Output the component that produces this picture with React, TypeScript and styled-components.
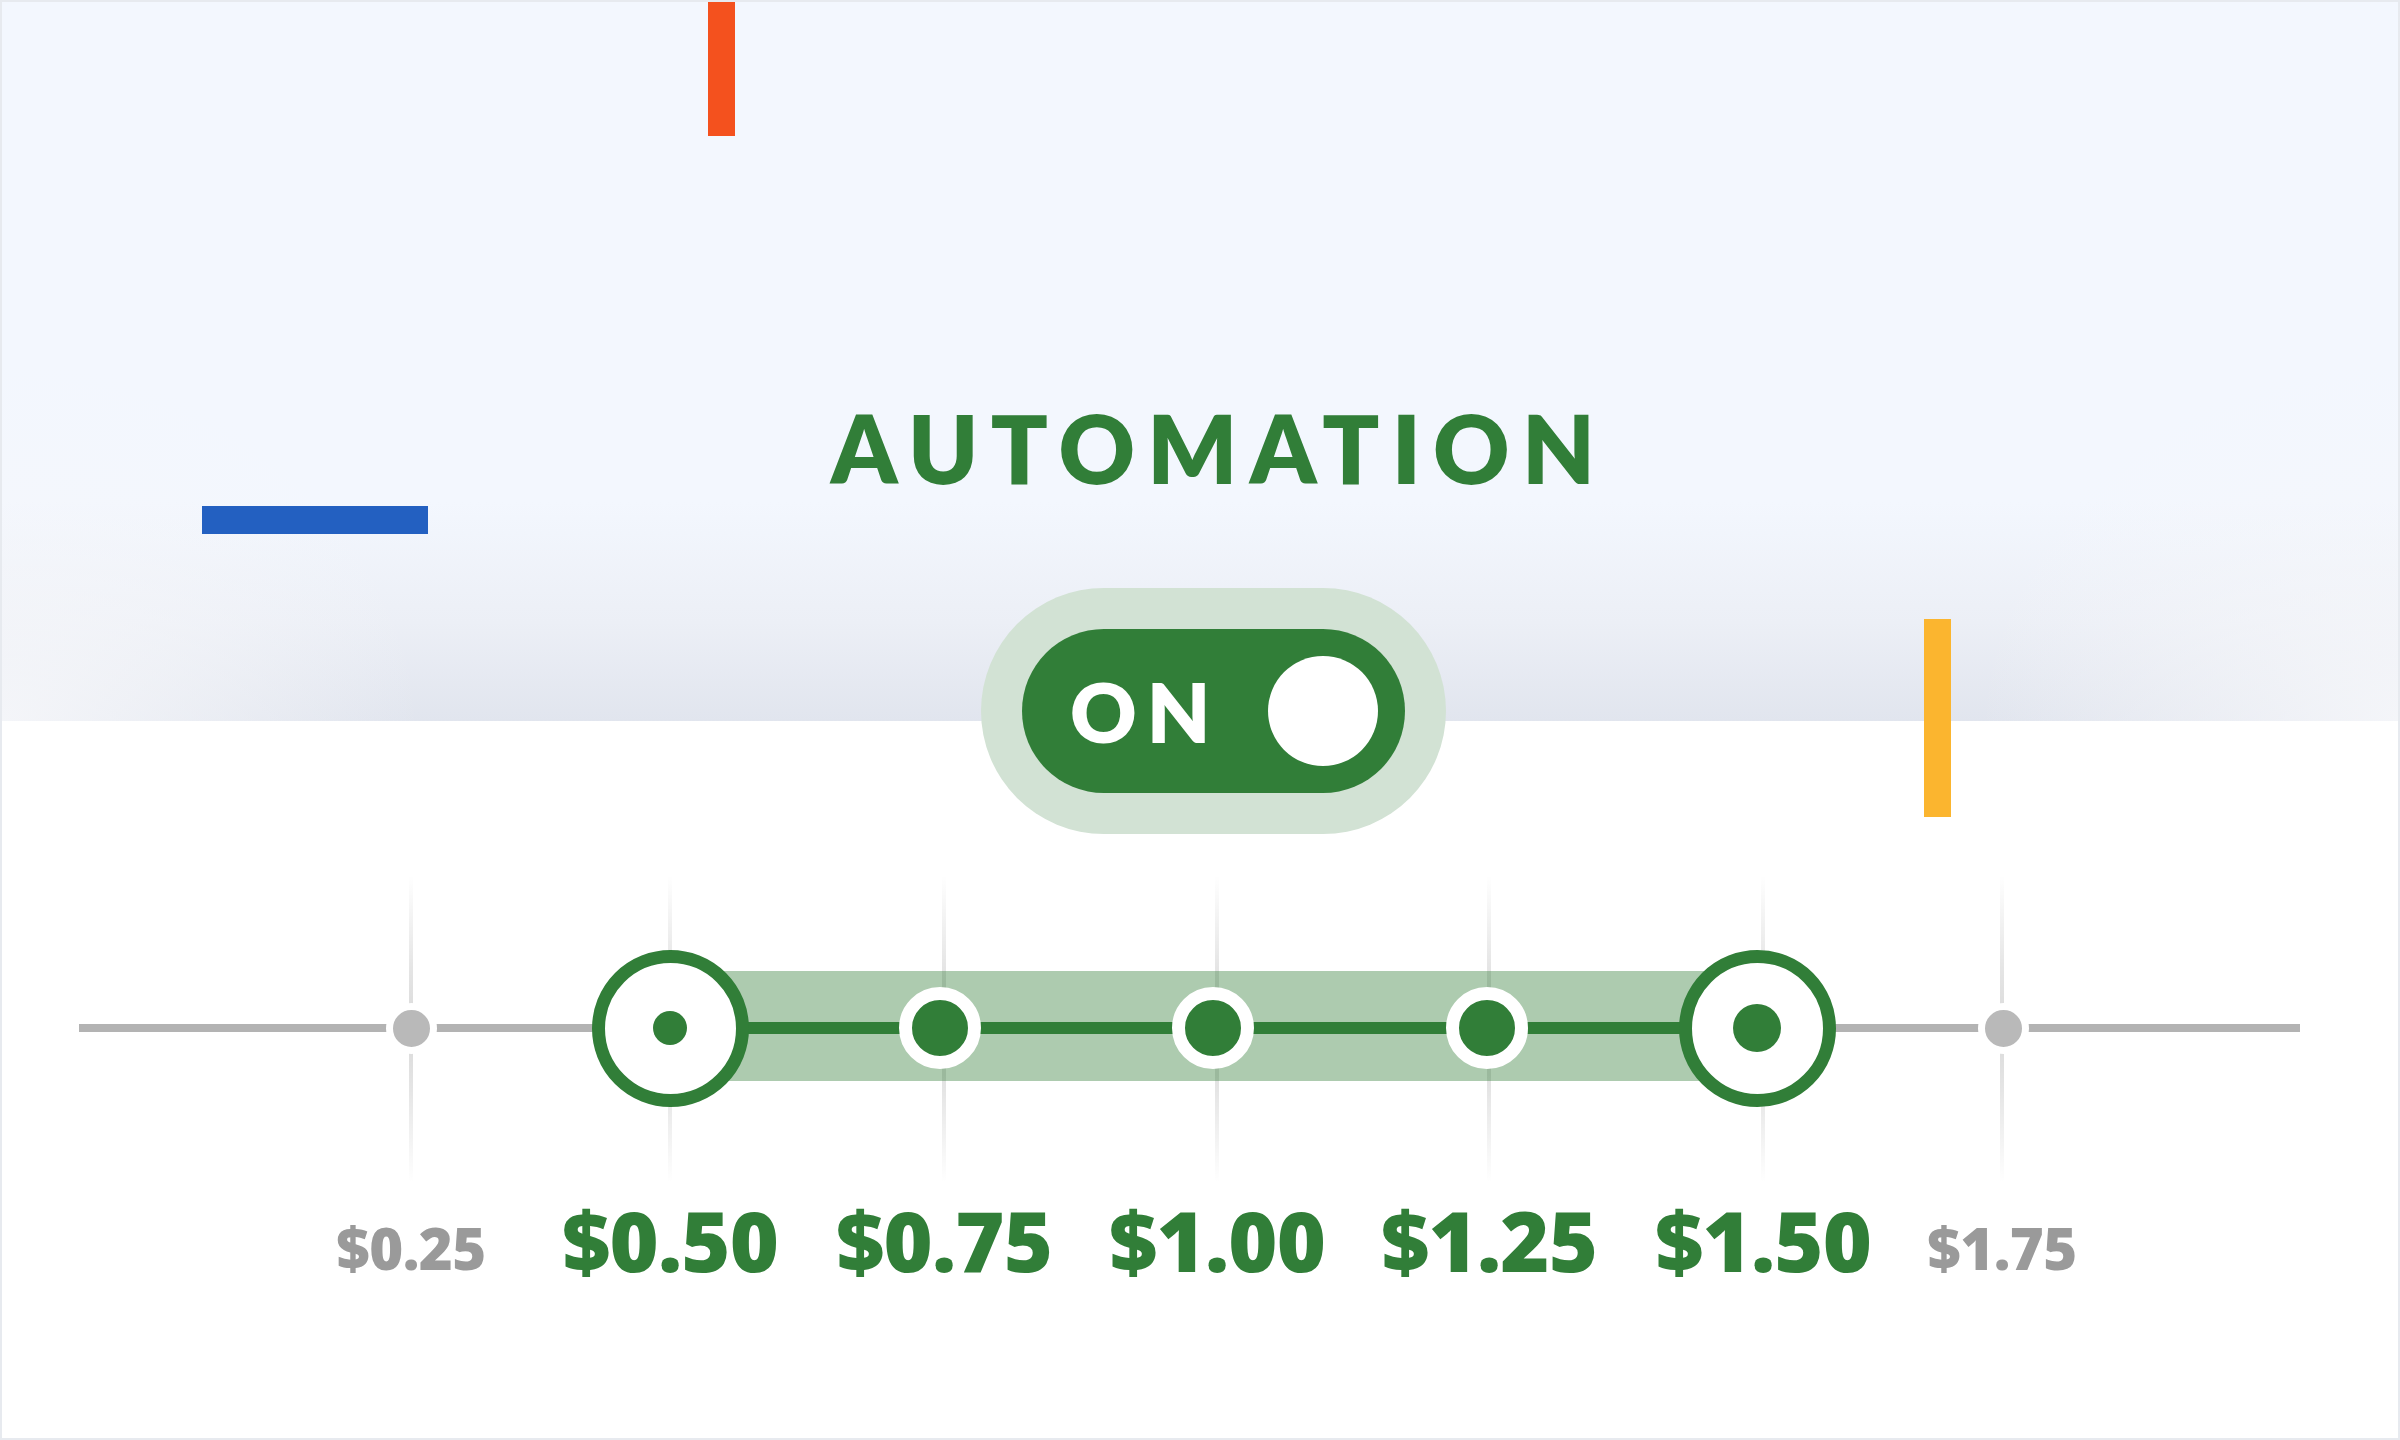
import React from "react";
import styled, { createGlobalStyle } from "styled-components";

const GREEN = "#317e38";
const LINE_Y = 153;

const Global = createGlobalStyle`
  html, body { margin: 0; padding: 0; background: #ffffff; }
  * { box-sizing: border-box; }
`;

const Frame = styled.div`
  position: relative;
  width: 2400px;
  height: 1440px;
  border: 2px solid #e7eaef;
  background: #ffffff;
  overflow: hidden;
  font-family: "Lato", "Liberation Sans", sans-serif;
`;

const Hero = styled.section`
  height: 719px;
  display: flex;
  flex-direction: column;
  align-items: center;
  padding-top: 399px;
  background:
    radial-gradient(ellipse 420px 360px at 0% 100%, rgba(246, 247, 250, 0.9), rgba(246, 247, 250, 0) 100%),
    radial-gradient(ellipse 420px 360px at 100% 100%, rgba(246, 247, 250, 0.9), rgba(246, 247, 250, 0) 100%),
    linear-gradient(180deg, #f3f7fe 0px, #f3f7fe 500px, #eceff6 620px, #e1e5ee 719px);
`;

const Title = styled.h1`
  margin: 0 0 0 38px;
  font-size: 94px;
  line-height: 1;
  font-weight: 800;
  letter-spacing: 0.13em;
  color: ${GREEN};
`;

const Toggle = styled.div`
  margin: 134px 0 0 27px;
  width: 383px;
  height: 164px;
  flex: none;
  border-radius: 82px;
  background: ${GREEN};
  box-shadow: 0 0 0 41px #d2e2d4;
  display: flex;
  align-items: center;
  justify-content: space-between;
  padding: 0 27px 0 48px;
  position: relative;
  z-index: 1;
`;

const ToggleLabel = styled.span`
  color: #ffffff;
  font-size: 82px;
  font-weight: 800;
  line-height: 1;
  letter-spacing: 0.12em;
`;

const Knob = styled.span`
  width: 110px;
  height: 110px;
  border-radius: 50%;
  background: #ffffff;
`;

const Bar = styled.div<{ $color: string }>`
  position: absolute;
  background: ${(p) => p.$color};
  z-index: 3;
`;

const Slider = styled.section`
  position: relative;
  margin-top: 154px;
  display: flex;
  align-items: flex-start;
  padding-left: 407px;
`;

const Rail = styled.div`
  position: absolute;
  left: 77px;
  width: 2221px;
  top: ${LINE_Y - 4}px;
  height: 8px;
  background: #b3b3b3;
`;

const Band = styled.div`
  position: absolute;
  left: 668px;
  width: 1087px;
  top: ${LINE_Y - 57}px;
  height: 110px;
  background: rgba(49, 126, 56, 0.4);
  z-index: 1;
`;

const ActiveLine = styled.div`
  position: absolute;
  left: 668px;
  width: 1087px;
  top: ${LINE_Y - 6}px;
  height: 12px;
  background: ${GREEN};
  z-index: 1;
`;

const StopColumn = styled.div<{ $gap: number }>`
  flex: none;
  width: 4px;
  margin-left: ${(p) => p.$gap}px;
  display: flex;
  flex-direction: column;
  align-items: center;
  background: linear-gradient(
      180deg,
      rgba(0, 0, 0, 0) 0%,
      rgba(0, 0, 0, 0.1) 30%,
      rgba(0, 0, 0, 0.15) 50%,
      rgba(0, 0, 0, 0.1) 70%,
      rgba(0, 0, 0, 0) 100%
    )
    center top / 4px 308px no-repeat;
`;

const MarkerSlot = styled.div`
  height: ${LINE_Y * 2}px;
  display: flex;
  align-items: center;
  justify-content: center;
`;

const Marker = styled.div<{ $kind: "off" | "on" | "handle"; $shift: number }>`
  position: relative;
  z-index: 2;
  flex: none;
  border-radius: 50%;
  display: flex;
  align-items: center;
  justify-content: center;
  margin-left: ${(p) => p.$shift * 2}px;
  ${(p) =>
    p.$kind === "off"
      ? `width: 51px; height: 51px; background: #b9b9b9; border: 7px solid #ffffff;`
      : p.$kind === "on"
      ? `width: 82px; height: 82px; background: ${GREEN}; border: 13px solid #ffffff;`
      : `width: 157px; height: 157px; background: #ffffff; border: 13px solid ${GREEN};`}
`;

const HandleDot = styled.span<{ $size: number }>`
  width: ${(p) => p.$size}px;
  height: ${(p) => p.$size}px;
  border-radius: 50%;
  background: ${GREEN};
`;

const Label = styled.span<{ $active: boolean }>`
  flex: none;
  white-space: nowrap;
  line-height: 84px;
  font-family: "Open Sans", "Lato", sans-serif;
  font-weight: 800;
  letter-spacing: -0.01em;
  ${(p) =>
    p.$active
      ? `font-size: 84px; margin-top: 17px; color: ${GREEN};`
      : `font-size: 58px; margin-top: 25px; color: #9a9a9a;`}
`;

type Stop = {
  value: string;
  kind: "off" | "on" | "handle";
  gap: number;
  shift: number;
  dot?: number;
};

const stops: Stop[] = [
  { value: "$0.25", kind: "off", gap: 0, shift: 0 },
  { value: "$0.50", kind: "handle", gap: 255, shift: 0, dot: 34 },
  { value: "$0.75", kind: "on", gap: 270, shift: -4 },
  { value: "$1.00", kind: "on", gap: 269, shift: -4 },
  { value: "$1.25", kind: "on", gap: 268, shift: -2 },
  { value: "$1.50", kind: "handle", gap: 270, shift: -6, dot: 48 },
  { value: "$1.75", kind: "off", gap: 235, shift: 1 },
];

export default function App() {
  return (
    <>
      <Global />
      <Frame>
        <Bar $color="#f4511e" style={{ left: 706, top: -2, width: 27, height: 136 }} />
        <Bar $color="#2360c1" style={{ left: 200, top: 504, width: 226, height: 28 }} />
        <Bar $color="#fbb52f" style={{ left: 1922, top: 617, width: 27, height: 198 }} />
        <Hero>
          <Title>AUTOMATION</Title>
          <Toggle role="switch" aria-checked="true">
            <ToggleLabel>ON</ToggleLabel>
            <Knob />
          </Toggle>
        </Hero>
        <Slider>
          <Rail />
          <Band />
          <ActiveLine />
          {stops.map((s) => (
            <StopColumn key={s.value} $gap={s.gap}>
              <MarkerSlot>
                <Marker $kind={s.kind} $shift={s.shift}>
                  {s.kind === "handle" && <HandleDot $size={s.dot ?? 34} />}
                </Marker>
              </MarkerSlot>
              <Label $active={s.kind !== "off"}>{s.value}</Label>
            </StopColumn>
          ))}
        </Slider>
      </Frame>
    </>
  );
}
